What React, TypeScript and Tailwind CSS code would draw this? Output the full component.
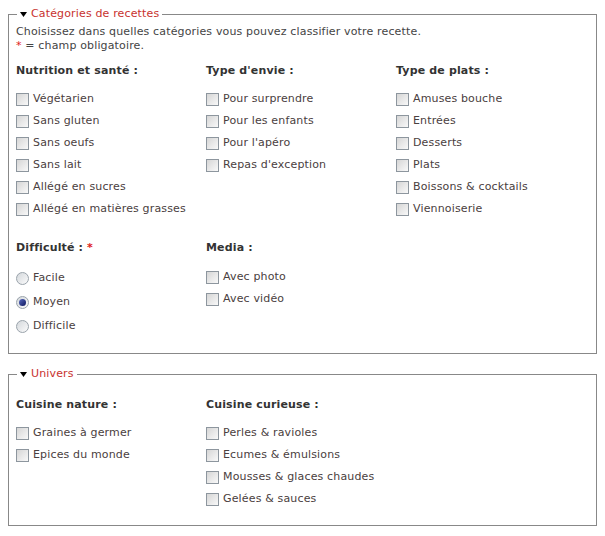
import React from 'react';

const Triangle = () => (
  <svg width="7" height="5" viewBox="0 0 7 5" className="mr-[4px] inline-block">
    <path d="M0 0 H7 L3.5 5 Z" fill="#000" />
  </svg>
);

const Box = ({ label }: { label: string }) => (
  <label className="flex h-[22px] items-center">
    <span className="mr-[4px] h-[13px] w-[13px] shrink-0 border border-[#8d969e] bg-gradient-to-br from-[#d6d6d6] to-[#f9f9f9]" />
    <span>{label}</span>
  </label>
);

const Radio = ({ label, checked }: { label: string; checked?: boolean }) => (
  <label className="flex h-[24px] items-center">
    <span className="mr-[4px] flex h-[13px] w-[13px] shrink-0 items-center justify-center rounded-full border border-[#9aa3ab] bg-gradient-to-br from-[#d4d8dc] to-[#fbfbfb]">
      {checked && <span className="h-[7px] w-[7px] rounded-full bg-gradient-to-br from-[#5a6bc0] to-[#10145e]" />}
    </span>
    <span>{label}</span>
  </label>
);

const Heading = ({ children }: { children: React.ReactNode }) => (
  <div className="mb-[10px] h-[14px] font-bold text-[#333]">{children}</div>
);

const Group = ({ title, items }: { title: string; items: string[] }) => (
  <div>
    <Heading>{title}</Heading>
    {items.map((i) => (
      <Box key={i} label={i} />
    ))}
  </div>
);

export default function App() {
  return (
    <div className="bg-white pb-[10px] font-['DejaVu_Sans',sans-serif] text-[11px] leading-[14px] tracking-[0.15px] text-[#4a4040]">
      <fieldset className="mx-2 mt-[7px] border border-[#888] pb-[15px] pl-[7px] pr-[7px]">
        <legend className="ml-[1px] flex items-center px-[3px] text-[#c8322e]">
          <Triangle />
          Catégories de recettes
        </legend>
        <div className="mt-[4px] text-[#444]">
          Choisissez dans quelles catégories vous pouvez classifier votre recette.
          <br />
          <span className="text-[#e02020]">*</span> = champ obligatoire.
        </div>
        <div className="mt-[11px] grid grid-cols-[190px_190px_1fr]">
          <Group
            title="Nutrition et santé :"
            items={['Végétarien', 'Sans gluten', 'Sans oeufs', 'Sans lait', 'Allégé en sucres', 'Allégé en matières grasses']}
          />
          <Group title="Type d'envie :" items={['Pour surprendre', 'Pour les enfants', "Pour l'apéro", "Repas d'exception"]} />
          <Group
            title="Type de plats :"
            items={['Amuses bouche', 'Entrées', 'Desserts', 'Plats', 'Boissons & cocktails', 'Viennoiserie']}
          />
        </div>
        <div className="mt-[21px] grid grid-cols-[190px_190px_1fr]">
          <div>
            <div className="mb-[11px] h-[14px] font-bold text-[#333]">
              Difficulté : <span className="text-[#e02020]">*</span>
            </div>
            <Radio label="Facile" />
            <Radio label="Moyen" checked />
            <Radio label="Difficile" />
          </div>
          <div>
            <div className="mb-[11px] h-[14px] font-bold text-[#333]">Media :</div>
            <Box label="Avec photo" />
            <Box label="Avec vidéo" />
          </div>
        </div>
      </fieldset>

      <fieldset className="mx-2 mt-[13px] border border-[#888] pb-[15px] pl-[7px] pr-[7px]">
        <legend className="ml-[1px] flex items-center px-[3px] text-[#c8322e]">
          <Triangle />
          Univers
        </legend>
        <div className="mt-[17px] grid grid-cols-[190px_190px_1fr]">
          <Group title="Cuisine nature :" items={['Graines à germer', 'Epices du monde']} />
          <Group
            title="Cuisine curieuse :"
            items={['Perles & ravioles', 'Ecumes & émulsions', 'Mousses & glaces chaudes', 'Gelées & sauces']}
          />
        </div>
      </fieldset>
    </div>
  );
}
